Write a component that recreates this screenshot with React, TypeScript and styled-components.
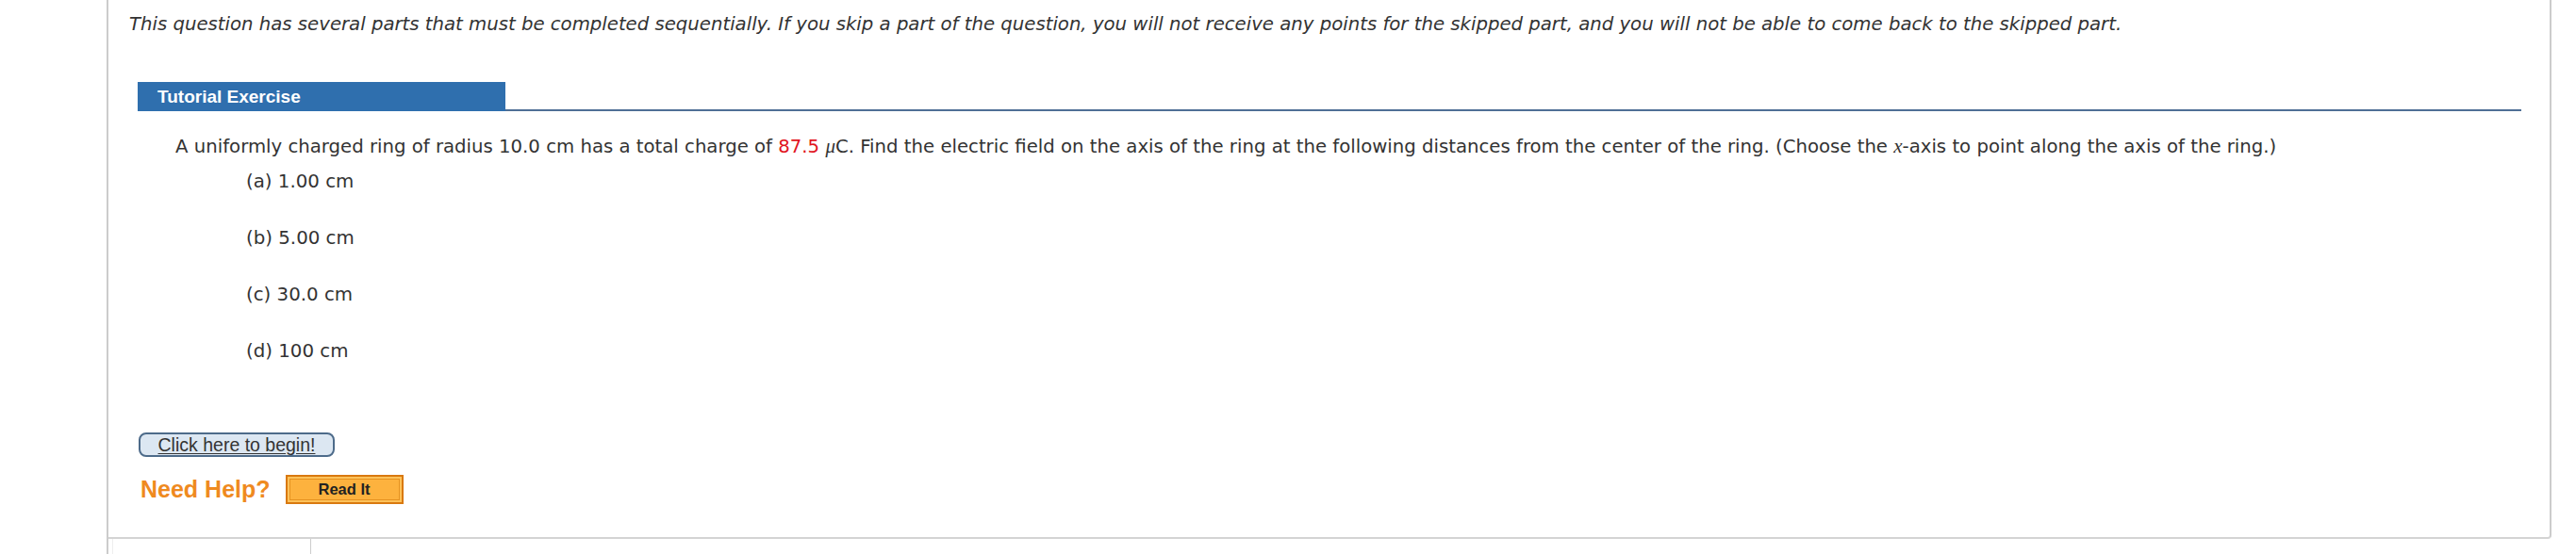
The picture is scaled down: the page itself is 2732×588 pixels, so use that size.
import styled, { createGlobalStyle } from 'styled-components';

const GlobalStyle = createGlobalStyle`
  html, body {
    margin: 0;
    padding: 0;
    background: #ffffff;
  }
  body {
    font-family: "DejaVu Sans", Verdana, sans-serif;
    color: #333333;
  }
`;

const Page = styled.div`
  width: 2732px;
  height: 588px;
  overflow: hidden;
  padding-left: 113px;
  box-sizing: border-box;
`;

const Frame = styled.div`
  width: 2593px;
  height: 588px;
  border-left: 2px solid #cccccc;
  box-sizing: border-box;
  display: flex;
  flex-direction: column;
`;

const QuestionCard = styled.div`
  height: 572px;
  box-sizing: border-box;
  border-right: 2px solid #cccccc;
  border-bottom: 2px solid #d4d4d4;
  border-bottom-right-radius: 4px;
  padding: 12px 0 0 22px;
  display: flex;
  flex-direction: column;
`;

const BelowRow = styled.div`
  flex: 1;
  display: flex;
  padding-left: 4px;
`;

const BelowBox = styled.div<{ $width?: number; $strong?: boolean }>`
  width: ${(p) => (p.$width ? `${p.$width}px` : 'auto')};
  flex: ${(p) => (p.$width ? 'none' : '1')};
  border-left: 1px solid ${(p) => (p.$strong ? '#cccccc' : '#eeeeee')};
`;

const Intro = styled.p`
  margin: 0;
  font-style: italic;
  font-size: 19.7px;
  line-height: 28px;
`;

const Tutorial = styled.div`
  margin: 47px 30px 0 9px;
  display: flex;
  align-items: flex-end;
`;

const TutorialTab = styled.div`
  width: 390px;
  height: 31px;
  box-sizing: border-box;
  background: #2f6fae;
  color: #ffffff;
  font-family: "Liberation Sans", Arial, sans-serif;
  font-weight: bold;
  font-size: 19px;
  line-height: 31px;
  padding-left: 21px;
`;

const TutorialRule = styled.div`
  flex: 1;
  height: 2px;
  background: #4f6f96;
`;

const Problem = styled.p`
  margin: 22px 0 0 49px;
  font-size: 19.7px;
  line-height: 30px;
`;

const Charge = styled.span`
  color: #e1141e;
`;

const MathVar = styled.i`
  font-family: "Liberation Serif", "Times New Roman", serif;
  font-size: 21px;
`;

const Parts = styled.ol`
  list-style: none;
  margin: 7px 0 0 124px;
  padding: 0;
  display: flex;
  flex-direction: column;
  gap: 30px;
`;

const Part = styled.li`
  font-size: 19.8px;
  line-height: 30px;
`;

const BeginButton = styled.button`
  margin: 71px 0 0 10px;
  width: 208px;
  height: 26px;
  box-sizing: border-box;
  border: 2px solid #4d6b8a;
  border-radius: 8px;
  background: #dce7f2;
  color: #333333;
  font-family: "Liberation Sans", Arial, sans-serif;
  font-size: 19.5px;
  line-height: 20px;
  padding: 0;
  text-decoration: underline;
  text-underline-offset: 2px;
  cursor: pointer;
`;

const HelpRow = styled.div`
  margin: 19px 0 0 12px;
  display: flex;
  align-items: center;
  gap: 16px;
`;

const HelpLabel = styled.span`
  font-family: "Liberation Sans", Arial, sans-serif;
  font-weight: bold;
  font-size: 25px;
  color: #ef8a1f;
`;

const ReadItButton = styled.button`
  width: 125px;
  height: 31px;
  box-sizing: border-box;
  border: 2px solid #d9790f;
  background: #fdb23e;
  box-shadow: inset 0 0 0 2px #ffc25a, inset 0 0 0 3px #e59220;
  color: #222222;
  font-family: "Liberation Sans", Arial, sans-serif;
  font-weight: bold;
  font-size: 16.5px;
  padding: 0;
  cursor: pointer;
`;

export default function App() {
  return (
    <>
      <GlobalStyle />
      <Page>
        <Frame>
          <QuestionCard>
            <Intro>
              This question has several parts that must be completed sequentially. If you skip a part of the
              question, you will not receive any points for the skipped part, and you will not be able to come back
              to the skipped part.
            </Intro>
            <Tutorial>
              <TutorialTab>Tutorial Exercise</TutorialTab>
              <TutorialRule />
            </Tutorial>
            <Problem>
              A uniformly charged ring of radius 10.0 cm has a total charge of <Charge>87.5</Charge>{' '}
              <MathVar>μ</MathVar>C. Find the electric field on the axis of the ring at the following distances from
              the center of the ring. (Choose the <MathVar>x</MathVar>-axis to point along the axis of the ring.)
            </Problem>
            <Parts>
              <Part>(a) 1.00 cm</Part>
              <Part>(b) 5.00 cm</Part>
              <Part>(c) 30.0 cm</Part>
              <Part>(d) 100 cm</Part>
            </Parts>
            <div>
              <BeginButton>Click here to begin!</BeginButton>
            </div>
            <HelpRow>
              <HelpLabel>Need Help?</HelpLabel>
              <ReadItButton>Read It</ReadItButton>
            </HelpRow>
          </QuestionCard>
          <BelowRow>
            <BelowBox $width={209} />
            <BelowBox $strong />
          </BelowRow>
        </Frame>
      </Page>
    </>
  );
}
